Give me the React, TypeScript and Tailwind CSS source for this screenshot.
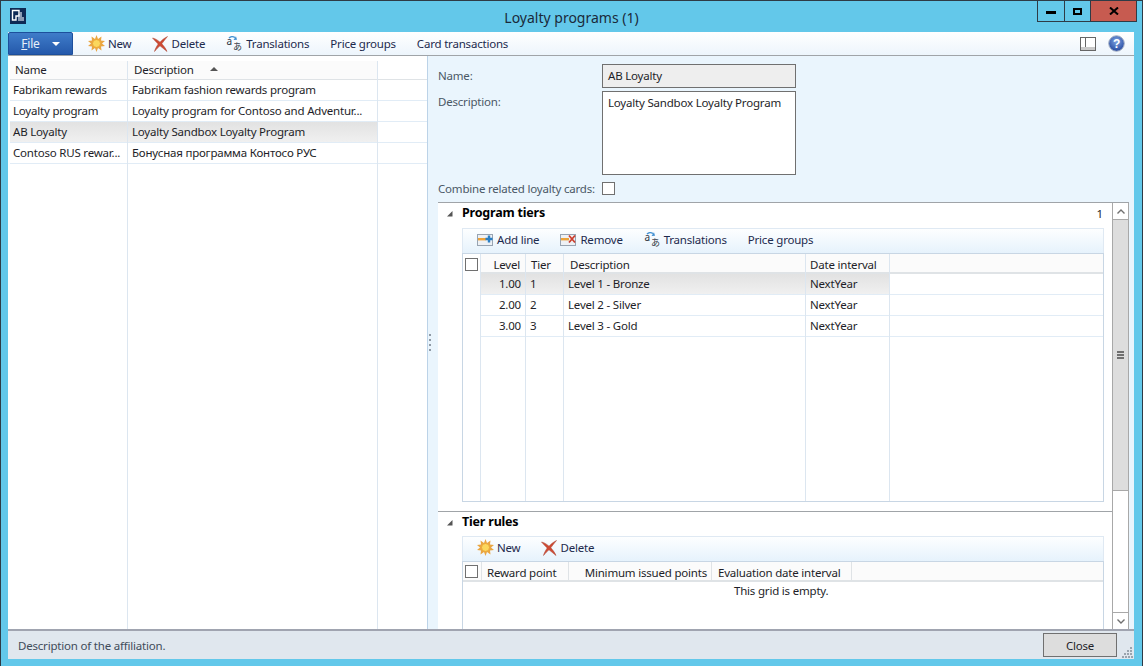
import React from 'react';

const SunIcon = () => (
  <svg width="17" height="17" viewBox="0 0 17 17" className="shrink-0">
    <path d="M8.5 0L10 4L13.5 1.5L13 5.5L17 6L14 8.5L17 11L13 11.5L13.5 15.5L10 13L8.5 17L7 13L3.5 15.5L4 11.5L0 11L3 8.5L0 6L4 5.5L3.5 1.5L7 4Z" fill="#eaa641" />
    <circle cx="8.5" cy="8.5" r="4" fill="#fbd75c" stroke="#e9a035" strokeWidth="0.8" />
  </svg>
);

const DeleteIcon = () => (
  <svg width="16" height="16" viewBox="0 0 16 16" className="shrink-0">
    <path d="M0.5 2C3.5 2.5 6 4.5 8 6.2C10 4 12.5 2 15.5 0.5C13.5 3 11.3 5.5 9.8 7.8C11.8 10 13.8 12.5 15 15.5C12.5 13.5 10.2 11.5 8 9.8C6 11.5 4 13.5 2.5 15.5C3.2 12.8 4.8 10.2 6.2 8C4.2 6 2.2 4 0.5 2Z" fill="#cf4a33" stroke="#a8402f" strokeWidth="0.5" />
  </svg>
);

const TranslateIcon = () => (
  <svg width="17" height="17" viewBox="0 0 17 17" className="shrink-0">
    <text x="0.5" y="10" fontSize="10" fill="#2c3440" fontFamily="'Noto Sans', sans-serif">a</text>
    <text x="7" y="15" fontSize="9" fill="#2c3440" fontFamily="'Noto Sans CJK JP', sans-serif">あ</text>
    <path d="M3 3.2C4.5 1.2 7 1 9 2.6" fill="none" stroke="#3f8fd2" strokeWidth="1.3" />
    <path d="M7.5 5L11 4.8L10 1.2Z" fill="#3f8fd2" />
  </svg>
);

const LineBase = () => (
  <>
    <rect x="0.5" y="2.5" width="15" height="11" fill="#eef1f5" stroke="#98a4b2" />
    <rect x="1" y="6" width="8" height="2.4" fill="#eda33a" />
  </>
);

const AddLineIcon = () => (
  <svg width="17" height="15" viewBox="0 0 17 15" className="shrink-0">
    <LineBase />
    <path d="M12 3.5V10.5M8.5 7H15.5" stroke="#2a7fc4" strokeWidth="2.4" />
  </svg>
);

const RemoveIcon = () => (
  <svg width="17" height="15" viewBox="0 0 17 15" className="shrink-0">
    <LineBase />
    <path d="M9 3.5L15 10.5M15 3.5L9 10.5" stroke="#cc4030" strokeWidth="1.8" />
  </svg>
);

const ToolBtn = ({ icon, label, className }: { icon?: React.ReactNode; label: string; className?: string }) => (
  <div className={`flex items-center gap-[3px] text-[#1d2a4d] ${className ?? ''}`}>
    {icon}
    <span>{label}</span>
  </div>
);

const Check = () => <div className="h-[13px] w-[13px] shrink-0 border border-[#707070] bg-white" />;

const Triangle = () => (
  <svg width="7" height="7" viewBox="0 0 7 7" className="shrink-0">
    <path d="M6.5 1V6.5H1Z" fill="#555" />
  </svg>
);

const listRows = [
  ['Fabrikam rewards', 'Fabrikam fashion rewards program'],
  ['Loyalty program', 'Loyalty program for Contoso and Adventur...'],
  ['AB Loyalty', 'Loyalty Sandbox Loyalty Program'],
  ['Contoso RUS rewar...', 'Бонусная программа Контосо РУС'],
];

const tierRows = [
  ['1.00', '1', 'Level 1 - Bronze', 'NextYear'],
  ['2.00', '2', 'Level 2 - Silver', 'NextYear'],
  ['3.00', '3', 'Level 3 - Gold', 'NextYear'],
];

const selectedBg = 'bg-gradient-to-b from-[#e2e2e2] to-[#f0f0f0]';

const ListColumn = ({ title, idx, className, pad, sort }: { title: string; idx: number; className: string; pad: string; sort?: boolean }) => (
  <div className={`flex flex-col border-r border-[#dce6f0] ${className}`}>
    <div className={`flex h-[19px] shrink-0 items-center border-b border-[#dfe3e6] bg-[#fbfbfb] ${pad}`}>
      <span className="ml-[2px]">{title}</span>
      {sort && (
        <svg width="8" height="4" viewBox="0 0 8 4" className="ml-[16px] mb-[3px]">
          <path d="M0 4L4 0L8 4Z" fill="#555" />
        </svg>
      )}
    </div>
    {listRows.map((r, i) => (
      <div key={i} className={`flex h-[21px] shrink-0 items-center whitespace-nowrap border-b border-[#e1ecf6] ${pad} ${i === 2 ? selectedBg : ''}`}>
        {r[idx]}
      </div>
    ))}
  </div>
);

const TierColumn = ({ title, idx, className, cell, head }: { title: string; idx: number; className: string; cell: string; head: string }) => (
  <div className={`flex flex-col border-r border-[#dce6f0] ${className}`}>
    <div className={`flex h-[20px] shrink-0 items-center border-b-2 border-[#dfe3e6] bg-[#fbfbfb] pt-[3px] ${head}`}>{title}</div>
    {tierRows.map((r, i) => (
      <div key={i} className={`flex h-[21px] shrink-0 items-center border-b border-[#e1ecf6] ${cell} ${i === 0 ? selectedBg : ''}`}>
        {r[idx]}
      </div>
    ))}
  </div>
);

const SubToolbar = ({ children }: { children: React.ReactNode }) => (
  <div className="ml-[24px] mr-[8px] flex h-[25px] shrink-0 items-center border border-b-0 border-[#dfe9f3] bg-gradient-to-b from-[#fdfeff] to-[#e6f2fc] pb-[3px] pl-[14px]">
    {children}
  </div>
);

export default function App() {
  return (
    <div
      className="flex h-[666px] w-[1143px] flex-col overflow-hidden border-x border-t border-[#2e3b46] bg-[#63c8ea] text-[11.5px] leading-none tracking-[-0.2px] text-[#1e1e28]"
      style={{ fontFamily: "'Noto Sans', 'Open Sans', sans-serif" }}
    >
      {/* title bar */}
      <div className="grid h-[31px] shrink-0 grid-cols-[1fr_auto_1fr] items-start">
        <div className="pl-[9px] pt-[7px]">
          <svg width="16" height="16" viewBox="0 0 16 16">
            <rect width="16" height="16" fill="#0e2a55" />
            <path d="M2.5 2.5H9V8H6V12H2.5Z" fill="none" stroke="#fff" strokeWidth="1.4" />
            <path d="M9 13V6M11 13V4M13 13V9" stroke="#dfe8f3" strokeWidth="1.2" />
          </svg>
        </div>
        <div className="pt-[10px] text-[14px] tracking-normal text-[#1a2a3a]">Loyalty programs (1)</div>
        <div className="mr-[5px] flex h-[21px] justify-end justify-self-end border-b border-[#2e3b46]">
          <div className="flex w-[28px] items-center justify-center border-x border-[#2e3b46]">
            <div className="mt-[3px] h-[3px] w-[10px] bg-black" />
          </div>
          <div className="flex w-[26px] items-center justify-center border-r border-[#2e3b46]">
            <div className="h-[7px] w-[9px] border-2 border-black" />
          </div>
          <div className="flex w-[46px] items-center justify-center border-r border-[#2e3b46] bg-[#c75b50]">
            <svg width="10" height="8" viewBox="0 0 10 8">
              <path d="M1 0.5L9 7.5M9 0.5L1 7.5" stroke="#000" strokeWidth="2" />
            </svg>
          </div>
        </div>
      </div>

      {/* window body */}
      <div className="ml-[7px] mr-[8px] flex min-h-0 flex-1 flex-col">
        {/* toolbar */}
        <div className="flex h-[24px] shrink-0 items-center border-b border-[#a0a4a8] bg-gradient-to-b from-[#ffffff] to-[#edf5fc] pr-[9px]">
          <div className="flex h-[23px] w-[65px] items-center justify-center gap-[12px] rounded-t-[2px] border border-[#1d4f9c] bg-gradient-to-b from-[#3f7cc9] to-[#2559ab] text-[12px] text-[#e8f0fa]">
            <span>
              <span className="underline">F</span>ile
            </span>
            <svg width="8" height="4" viewBox="0 0 8 4">
              <path d="M0 0H8L4 4Z" fill="#fff" />
            </svg>
          </div>
          <ToolBtn icon={<SunIcon />} label="New" className="ml-[15px]" />
          <ToolBtn icon={<DeleteIcon />} label="Delete" className="ml-[21px]" />
          <ToolBtn icon={<TranslateIcon />} label="Translations" className="ml-[21px]" />
          <ToolBtn label="Price groups" className="ml-[21px]" />
          <ToolBtn label="Card transactions" className="ml-[21px]" />
          <div className="ml-auto flex items-center gap-[12px]">
            <svg width="16" height="14" viewBox="0 0 16 14">
              <rect x="0.5" y="0.5" width="15" height="13" fill="#fff" stroke="#666" />
              <rect x="1" y="10" width="14" height="3" fill="#c9c9c9" />
              <path d="M5.5 1V10" stroke="#666" />
            </svg>
            <svg width="17" height="17" viewBox="0 0 17 17">
              <defs>
                <radialGradient id="helpFill" cx="50%" cy="35%" r="65%">
                  <stop offset="0%" stopColor="#7fa5e3" />
                  <stop offset="100%" stopColor="#24489f" />
                </radialGradient>
              </defs>
              <circle cx="8.5" cy="8.5" r="7.8" fill="url(#helpFill)" stroke="#a9b4c6" />
              <text x="8.5" y="13" textAnchor="middle" fontSize="12" fontWeight="700" fill="#fff" fontFamily="'Liberation Sans', sans-serif">?</text>
            </svg>
          </div>
        </div>

        <div className="flex min-h-0 flex-1">
          {/* left list */}
          <div className="flex w-[419px] shrink-0 bg-white pl-[2px] pt-[5px]">
            <ListColumn title="Name" idx={0} className="w-[118px] shrink-0" pad="pl-[3px]" />
            <ListColumn title="Description" idx={1} className="w-[250px] shrink-0" pad="pl-[4px]" sort />
            <div className="flex flex-1 flex-col">
              <div className="h-[19px] border-b border-[#dfe3e6]" />
              <div className="h-[21px] border-b border-[#e1ecf6]" />
              <div className="h-[21px] border-b border-[#e1ecf6]" />
              <div className="h-[21px] border-b border-[#e1ecf6]" />
              <div className="h-[21px] border-b border-[#e1ecf6]" />
            </div>
          </div>

          {/* splitter */}
          <div className="flex w-[5px] shrink-0 flex-col items-end justify-center gap-[3px] border-l border-[#bcd3e8] bg-[#eaf5fd] pr-[1px]">
            <div className="h-[2px] w-[2px] bg-[#8f9aa6]" />
            <div className="h-[2px] w-[2px] bg-[#8f9aa6]" />
            <div className="h-[2px] w-[2px] bg-[#8f9aa6]" />
            <div className="h-[2px] w-[2px] bg-[#8f9aa6]" />
          </div>

          {/* details */}
          <div className="flex min-w-0 flex-1 flex-col bg-[#eaf5fd] pl-[6px] pr-[5px] pt-[8px] text-[#4a5866]">
            <div className="grid shrink-0 grid-cols-[164px_194px] gap-y-[3px]">
              <div className="pt-[6px]">Name:</div>
              <div className="flex h-[24px] items-center border border-[#707070] bg-[#eeeeee] pl-[5px] text-[#1e1e28]">AB Loyalty</div>
              <div className="pt-[5px]">Description:</div>
              <div className="h-[84px] border border-[#707070] bg-white pl-[5px] pt-[5px] text-[#1e1e28]">Loyalty Sandbox Loyalty Program</div>
            </div>
            <div className="mt-[7px] flex h-[13px] shrink-0 items-center">
              <span className="w-[164px]">Combine related loyalty cards:</span>
              <Check />
            </div>

            <div className="mt-[7px] flex min-h-0 flex-1 border-t border-[#a0a4a8] bg-white text-[#1e1e28]">
              <div className="flex min-w-0 flex-1 flex-col">
                {/* program tiers */}
                <div className="flex h-[25px] shrink-0 items-center pb-[4px] pl-[8px] pr-[9px]">
                  <Triangle />
                  <span className="ml-[9px] text-[12.5px] font-bold tracking-[-0.2px] text-black">Program tiers</span>
                  <span className="ml-auto">1</span>
                </div>
                <SubToolbar>
                  <ToolBtn icon={<AddLineIcon />} label="Add line" />
                  <ToolBtn icon={<RemoveIcon />} label="Remove" className="ml-[21px]" />
                  <ToolBtn icon={<TranslateIcon />} label="Translations" className="ml-[21px]" />
                  <ToolBtn label="Price groups" className="ml-[21px]" />
                </SubToolbar>
                <div className="ml-[24px] mr-[8px] flex h-[249px] shrink-0 border border-[#c8d6e4]">
                  <div className="w-[18px] shrink-0 border-r border-[#dce6f0] pl-[2px] pt-[4px]">
                    <Check />
                  </div>
                  <TierColumn title="Level" idx={0} className="w-[45px] shrink-0" cell="justify-end pr-[4px]" head="justify-end pr-[5px]" />
                  <TierColumn title="Tier" idx={1} className="w-[38px] shrink-0" cell="pl-[4px]" head="pl-[5px]" />
                  <TierColumn title="Description" idx={2} className="w-[242px] shrink-0" cell="pl-[4px]" head="pl-[6px]" />
                  <TierColumn title="Date interval" idx={3} className="w-[84px] shrink-0" cell="pl-[4px]" head="pl-[4px]" />
                  <div className="flex flex-1 flex-col">
                    <div className="h-[20px] border-b-2 border-[#dfe3e6] bg-[#fbfbfb]" />
                    <div className="h-[21px] border-b border-[#e1ecf6]" />
                    <div className="h-[21px] border-b border-[#e1ecf6]" />
                    <div className="h-[21px] border-b border-[#e1ecf6]" />
                  </div>
                </div>

                {/* tier rules */}
                <div className="mt-[9px] h-px shrink-0 bg-[#a0a4a8]" />
                <div className="flex h-[24px] shrink-0 items-center pb-[4px] pl-[8px]">
                  <Triangle />
                  <span className="ml-[9px] text-[12.5px] font-bold tracking-[-0.2px] text-black">Tier rules</span>
                </div>
                <SubToolbar>
                  <ToolBtn icon={<SunIcon />} label="New" />
                  <ToolBtn icon={<DeleteIcon />} label="Delete" className="ml-[21px]" />
                </SubToolbar>
                <div className="ml-[24px] mr-[8px] min-h-0 flex-1 border-x border-t border-[#c8d6e4]">
                  <div className="flex h-[20px] items-center border-b-2 border-[#dfe3e6] bg-[#fbfbfb] pl-[2px]">
                    <Check />
                    <div className="ml-[3px] flex h-full w-[88px] items-center border-x border-[#dfe3e6] pl-[5px] pt-[3px]">Reward point</div>
                    <div className="flex h-full w-[143px] items-center justify-end border-r border-[#dfe3e6] pr-[4px] pt-[3px]">Minimum issued points</div>
                    <div className="flex h-full w-[140px] items-center border-r border-[#dfe3e6] pl-[6px] pt-[3px]">Evaluation date interval</div>
                  </div>
                  <div className="mt-[3px] pl-[271px]">This grid is empty.</div>
                </div>
              </div>

              {/* scrollbar */}
              <div className="flex w-[17px] shrink-0 flex-col border-x border-[#a8a8a8]">
                <div className="flex h-[17px] shrink-0 items-center justify-center border-b border-[#a8a8a8]">
                  <svg width="8" height="5" viewBox="0 0 8 5">
                    <path d="M0.5 4.5L4 1L7.5 4.5" fill="none" stroke="#707070" strokeWidth="1.4" />
                  </svg>
                </div>
                <div className="flex h-[271px] shrink-0 flex-col items-center justify-center gap-px border-b border-[#a8a8a8] bg-[#dddddd]">
                  <div className="h-[2px] w-[7px] bg-[#707070]" />
                  <div className="h-[2px] w-[7px] bg-[#707070]" />
                  <div className="h-[2px] w-[7px] bg-[#707070]" />
                </div>
                <div className="flex-1" />
                <div className="flex h-[17px] shrink-0 items-center justify-center border-t border-[#a8a8a8]">
                  <svg width="8" height="5" viewBox="0 0 8 5">
                    <path d="M0.5 0.5L4 4L7.5 0.5" fill="none" stroke="#707070" strokeWidth="1.4" />
                  </svg>
                </div>
              </div>
            </div>
          </div>
        </div>

        {/* status bar */}
        <div className="flex h-[30px] shrink-0 items-center border-t-2 border-[#a0a4b0] bg-[#e0e7ee] pl-[10px] pr-[1px] text-[#3f4c5a]">
          <span className="pt-[1px]">Description of the affiliation.</span>
          <div className="ml-auto flex h-[24px] w-[74px] items-center justify-center border border-[#707070] bg-[#dddddd] pt-[1px] text-[#1e1e28]">Close</div>
          <svg width="11" height="11" viewBox="0 0 11 11" className="ml-[5px] mt-[14px]">
            <path d="M8 0H10V2H8ZM5 3H7V5H5ZM8 3H10V5H8ZM2 6H4V8H2ZM5 6H7V8H5ZM8 6H10V8H8ZM0 9H2V11H0ZM3 9H5V11H3ZM6 9H8V11H6ZM9 9H11V11H9Z" fill="#9aa4ae" />
          </svg>
        </div>
      </div>
      <div className="h-[7px] shrink-0" />
    </div>
  );
}
